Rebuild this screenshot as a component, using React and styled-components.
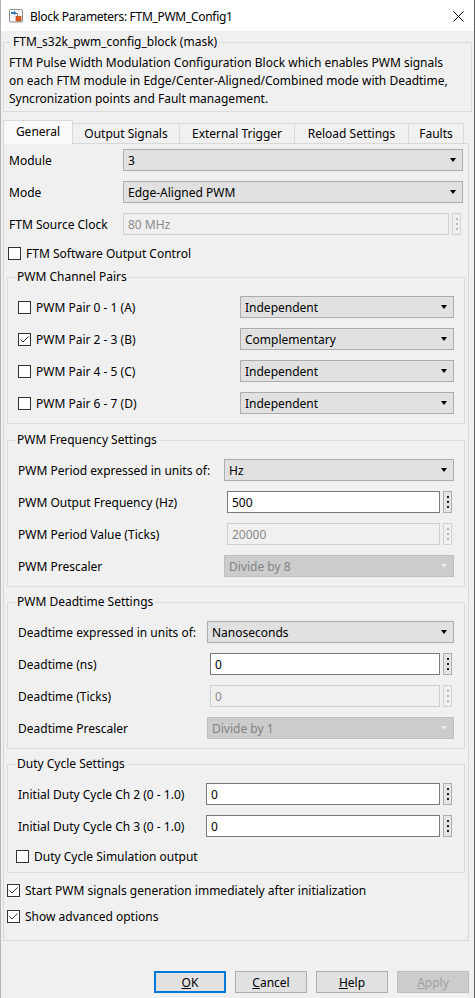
import React from 'react';
import styled, { createGlobalStyle } from 'styled-components';

const GlobalStyle = createGlobalStyle`
  * { box-sizing: border-box; }
  body {
    margin: 0;
    background: #f0f0f0;
    font-family: "Noto Sans", "Open Sans", sans-serif;
    font-size: 12px;
    color: #000;
  }
`;

const Window = styled.div`
  width: 475px;
  height: 998px;
  background: #f0f0f0;
  border-left: 1px solid #b4b4b4;
  border-right: 1px solid #5f5f5f;
  display: flex;
  flex-direction: column;
  overflow: hidden;
`;

const TitleBar = styled.div`
  height: 31px;
  flex: none;
  background: #fff;
  display: flex;
  align-items: center;
  padding: 1px 10px 0 7px;
`;

const TitleText = styled.div`
  margin-left: 6px;
  flex: 1;
  white-space: nowrap;
  letter-spacing: -0.3px;
`;

const Body = styled.div`
  padding: 0 2px;
  display: flex;
  flex-direction: column;
`;

const MaskBox = styled.fieldset`
  margin: 3px 0 0;
  padding: 4px 5px 3px;
  border: 1px solid #dcdcdc;
  min-width: 0;
`;

const MaskTitle = styled.legend`
  padding: 0 2px;
  margin-left: 2px;
  line-height: 16px;
`;

const Description = styled.div`
  line-height: 18px;
  white-space: nowrap;
`;

const TabBar = styled.div`
  margin-top: 8px;
  height: 23px;
  display: flex;
  align-items: flex-end;
`;

const Tab = styled.div`
  width: ${p => p.$w}px;
  height: ${p => (p.$active ? 24 : 20)}px;
  margin-bottom: ${p => (p.$active ? -1 : 0)}px;
  margin-left: ${p => (p.$first ? 0 : -1)}px;
  background: ${p => (p.$active ? '#f9f9f9' : '#f0f0f0')};
  border: 1px solid #d9d9d9;
  border-bottom: none;
  position: relative;
  z-index: ${p => (p.$active ? 1 : 0)};
  display: flex;
  align-items: center;
  justify-content: center;
  padding-bottom: ${p => (p.$active ? 3 : 0)}px;
  white-space: nowrap;
`;

const Pane = styled.div`
  margin-right: 3px;
  border: 1px solid #d9d9d9;
  padding: 5px 3px 16px;
  display: flex;
  flex-direction: column;
`;

const TopForm = styled.div`
  padding: 0 2px 0 2px;
`;

const FormGrid = styled.div`
  display: grid;
  grid-template-columns: ${p => p.$label}px 1fr;
  grid-auto-rows: 22px;
  row-gap: 10px;
  align-items: center;
`;

const Label = styled.div`
  white-space: nowrap;
`;

const Combo = styled.div`
  height: 22px;
  border: 1px solid ${p => (p.$disabled ? '#bfbfbf' : '#adadad')};
  background: ${p => (p.$disabled ? '#cccccc' : '#e1e1e1')};
  color: ${p => (p.$disabled ? '#838383' : '#000')};
  display: flex;
  align-items: center;
  padding-left: 4px;
  white-space: nowrap;
`;

const Arrow = styled.span`
  margin-left: auto;
  margin-right: 6px;
  width: 0;
  height: 0;
  border-left: 3.5px solid transparent;
  border-right: 3.5px solid transparent;
  border-top: 4px solid ${p => (p.$disabled ? '#ececec' : '#000')};
`;

const EditGroup = styled.div`
  display: flex;
  gap: 3px;
  margin-left: ${p => p.$inset}px;
  margin-right: 2px;
`;

const Edit = styled.div`
  flex: 1;
  height: 22px;
  border: 1px solid ${p => (p.$disabled ? '#cfcfcf' : '#7a7a7a')};
  background: ${p => (p.$disabled ? '#f0f0f0' : '#fff')};
  color: ${p => (p.$disabled ? '#8a8a8a' : '#000')};
  display: flex;
  align-items: center;
  padding-left: 4px;
`;

const DotsButton = styled.div`
  width: 9px;
  height: 22px;
  border: 1px solid ${p => (p.$disabled ? '#d2d2d2' : '#adadad')};
  background: ${p => (p.$disabled ? '#f0f0f0' : '#e5e5e5')};
  display: flex;
  flex-direction: column;
  align-items: center;
  justify-content: center;
  gap: 3px;
`;

const Dot = styled.span`
  width: 2px;
  height: 2px;
  background: ${p => (p.$disabled ? '#b4b4b4' : '#1a1a1a')};
`;

const CheckRow = styled.div`
  display: flex;
  align-items: center;
  gap: 5px;
  height: 16px;
  margin-top: ${p => p.$mt || 0}px;
  margin-left: ${p => p.$ml || 0}px;
  margin-bottom: ${p => p.$mb || 0}px;
  white-space: nowrap;
`;

const Box = styled.span`
  width: 13px;
  height: 13px;
  flex: none;
  border: 1px solid #333;
  background: #fff;
  display: flex;
  align-items: center;
  justify-content: center;
`;

const Group = styled.fieldset`
  margin: ${p => p.$mt}px 0 0;
  padding: 11px 10px 9px;
  border: 1px solid #dcdcdc;
  min-width: 0;
`;

const GroupTitle = styled.legend`
  padding: 0 2px;
  margin-left: -3px;
  line-height: 16px;
`;

const ButtonBar = styled.div`
  padding: 30px 3px 0 0;
  display: flex;
  justify-content: flex-end;
  gap: 9px;
`;

const Button = styled.button`
  width: 72px;
  height: 22px;
  padding: 0;
  font: inherit;
  background: ${p => (p.$disabled ? '#cccccc' : '#e1e1e1')};
  color: ${p => (p.$disabled ? '#a0a0a0' : '#000')};
  border: 1px solid ${p => (p.$default ? '#0078d7' : p.$disabled ? '#bfbfbf' : '#adadad')};
  box-shadow: ${p => (p.$default ? 'inset 0 0 0 1px #0078d7' : 'none')};
`;

function BlockIcon() {
  return (
    <svg width="16" height="16" viewBox="0 0 16 16">
      <rect x="1.5" y="1.5" width="13" height="12.5" rx="1" fill="#f6f6f6" stroke="#8c8c8c" />
      <path d="M3 4h3V2.8L8.6 5 6 7.2V6H3z" fill="#2f7fd0" />
      <path d="M7 5.5h2.5v3" fill="none" stroke="#5a5a5a" strokeWidth="0.8" />
      <rect x="8" y="8.5" width="5" height="4.5" fill="#e55a1e" stroke="#a43b0d" strokeWidth="0.6" />
    </svg>
  );
}

function CloseIcon() {
  return (
    <svg width="11" height="11" viewBox="0 0 11 11">
      <path d="M0.5 0.5L10.5 10.5M10.5 0.5L0.5 10.5" stroke="#000" strokeWidth="1" />
    </svg>
  );
}

function Check({ checked, children, ...rest }) {
  return (
    <CheckRow {...rest}>
      <Box>
        {checked && (
          <svg width="11" height="11" viewBox="0 0 11 11">
            <path d="M1.5 5.5L4 8L9.5 2.5" fill="none" stroke="#333" strokeWidth="1" />
          </svg>
        )}
      </Box>
      <span>{children}</span>
    </CheckRow>
  );
}

function Select({ value, disabled }) {
  return (
    <Combo $disabled={disabled}>
      {value}
      <Arrow $disabled={disabled} />
    </Combo>
  );
}

function Field({ value, disabled, inset }) {
  return (
    <EditGroup $inset={inset}>
      <Edit $disabled={disabled}>{value}</Edit>
      <DotsButton $disabled={disabled}>
        <Dot $disabled={disabled} />
        <Dot $disabled={disabled} />
        <Dot $disabled={disabled} />
      </DotsButton>
    </EditGroup>
  );
}

const tabs = [
  { name: 'General', w: 70, active: true },
  { name: 'Output Signals', w: 108 },
  { name: 'External Trigger', w: 116 },
  { name: 'Reload Settings', w: 115 },
  { name: 'Faults', w: 56 },
];

const pairs = [
  { name: 'PWM Pair 0 - 1 (A)', mode: 'Independent', checked: false },
  { name: 'PWM Pair 2 - 3 (B)', mode: 'Complementary', checked: true },
  { name: 'PWM Pair 4 - 5 (C)', mode: 'Independent', checked: false },
  { name: 'PWM Pair 6 - 7 (D)', mode: 'Independent', checked: false },
];

function App() {
  return (
    <Window>
      <GlobalStyle />
      <TitleBar>
        <BlockIcon />
        <TitleText>Block Parameters: FTM_PWM_Config1</TitleText>
        <CloseIcon />
      </TitleBar>

      <Body>
        <MaskBox>
          <MaskTitle>FTM_s32k_pwm_config_block (mask)</MaskTitle>
          <Description>
            FTM Pulse Width Modulation Configuration Block which enables PWM signals
            <br />
            on each FTM module in Edge/Center-Aligned/Combined mode with Deadtime,
            <br />
            Syncronization points and Fault management.
          </Description>
        </MaskBox>

        <TabBar>
          {tabs.map((t, i) => (
            <Tab key={t.name} $w={t.w} $active={t.active} $first={i === 0}>
              {t.name}
            </Tab>
          ))}
        </TabBar>

        <Pane>
          <TopForm>
            <FormGrid $label={114}>
              <Label>Module</Label>
              <Select value="3" />
              <Label>Mode</Label>
              <Select value="Edge-Aligned PWM" />
              <Label>FTM Source Clock</Label>
              <Field value="80 MHz" disabled inset={0} />
            </FormGrid>
          </TopForm>
          <Check $mt={10} $ml={1}>FTM Software Output Control</Check>

          <Group $mt={8}>
            <GroupTitle>PWM Channel Pairs</GroupTitle>
            <FormGrid $label={222}>
              {pairs.map(p => (
                <React.Fragment key={p.name}>
                  <Check checked={p.checked}>{p.name}</Check>
                  <Select value={p.mode} />
                </React.Fragment>
              ))}
            </FormGrid>
          </Group>

          <Group $mt={8}>
            <GroupTitle>PWM Frequency Settings</GroupTitle>
            <FormGrid $label={206}>
              <Label>PWM Period expressed in units of:</Label>
              <Select value="Hz" />
              <Label>PWM Output Frequency (Hz)</Label>
              <Field value="500" inset={3} />
              <Label>PWM Period Value (Ticks)</Label>
              <Field value="20000" disabled inset={3} />
              <Label>PWM Prescaler</Label>
              <Select value="Divide by 8" disabled />
            </FormGrid>
          </Group>

          <Group $mt={7}>
            <GroupTitle>PWM Deadtime Settings</GroupTitle>
            <FormGrid $label={189}>
              <Label>Deadtime expressed in units of:</Label>
              <Select value="Nanoseconds" />
              <Label>Deadtime (ns)</Label>
              <Field value="0" inset={3} />
              <Label>Deadtime (Ticks)</Label>
              <Field value="0" disabled inset={3} />
              <Label>Deadtime Prescaler</Label>
              <Select value="Divide by 1" disabled />
            </FormGrid>
          </Group>

          <Group $mt={7}>
            <GroupTitle>Duty Cycle Settings</GroupTitle>
            <FormGrid $label={185}>
              <Label>Initial Duty Cycle Ch 2 (0 - 1.0)</Label>
              <Field value="0" inset={3} />
              <Label>Initial Duty Cycle Ch 3 (0 - 1.0)</Label>
              <Field value="0" inset={3} />
            </FormGrid>
            <Check $mt={11} $ml={-2} $mb={-1}>Duty Cycle Simulation output</Check>
          </Group>

          <Check checked $mt={9}>Start PWM signals generation immediately after initialization</Check>
          <Check checked $mt={10}>Show advanced options</Check>
        </Pane>

        <ButtonBar>
          <Button $default><u>O</u>K</Button>
          <Button><u>C</u>ancel</Button>
          <Button><u>H</u>elp</Button>
          <Button $disabled disabled><u>A</u>pply</Button>
        </ButtonBar>
      </Body>
    </Window>
  );
}

export default App;
